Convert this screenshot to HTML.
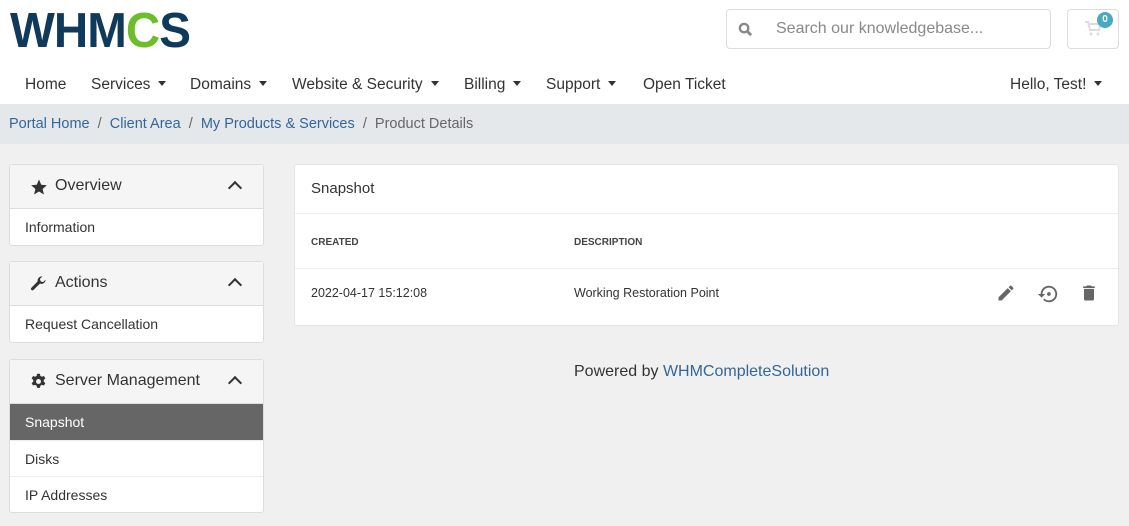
<!DOCTYPE html>
<html><head><meta charset="utf-8"><style>
*{box-sizing:border-box;margin:0;padding:0}
body{width:1129px;height:526px;overflow:hidden;background:#f0f0f0;font-family:"Liberation Sans",sans-serif;color:#333;position:relative}
.hdr{position:absolute;left:0;top:0;width:1129px;height:104px;background:#fff}
.logo{position:absolute;left:10px;top:3px;font-size:49px;font-weight:bold;color:#0f3a5b;letter-spacing:-1px;transform:scaleX(0.97);transform-origin:left}
.search{position:absolute;left:726px;top:9px;width:325px;height:40px;border:1px solid #ddd;border-radius:4px;font-size:16px;color:#888;padding:10px 0 0 49px}
.cart{position:absolute;left:1067px;top:9px;width:52px;height:40px;border:1px solid #ddd;border-radius:4px}
.badge{position:absolute;left:1097px;top:12px;width:16px;height:16px;border-radius:50%;background:#49a9c0;color:#fff;font-size:10px;font-weight:bold;text-align:center;line-height:16px}
.nav{position:absolute;top:76px;font-size:15.5px;color:#333}
.car::after{content:"";display:inline-block;margin-left:8px;border-left:4px solid transparent;border-right:4px solid transparent;border-top:5px solid #333;vertical-align:3px}
.bc{position:absolute;left:0;top:104px;width:1129px;height:40px;background:#e5e8eb;font-size:14.5px;padding:12px 0 0 9px;color:#666}
.bc a{color:#336699;text-decoration:none}
.side{position:absolute;left:9px;width:255px;background:#fff;border:1px solid #ddd;border-radius:3px}
.sh{height:44px;background:#f5f5f5;border-bottom:1px solid #ddd;font-size:16px;padding:12px 0 0 45px;position:relative}
.sh svg{position:absolute;left:20px;top:13px}
.sh::after{content:"";position:absolute;right:23px;top:18px;width:8px;height:8px;border-left:2px solid #333;border-top:2px solid #333;transform:rotate(45deg)}
.it{height:36px;font-size:14px;padding:10px 0 0 15px;border-top:1px solid #eee}
.main{position:absolute;left:294px;top:164px;width:825px;height:162px;background:#fff;border:1px solid #e5e5e5;border-radius:3px}
</style></head><body>
<div class="hdr"></div>
<div class="logo">WHM<span style="color:#6cbf2a">C</span>S</div>
<div class="search">Search our knowledgebase...</div>
<svg style="position:absolute;left:738px;top:22px" width="15" height="15" viewBox="0 0 16 16"><circle cx="6.5" cy="6.5" r="4.5" fill="none" stroke="#888" stroke-width="2.5"/><path d="M10 10l4 4" stroke="#888" stroke-width="3"/></svg>
<div class="cart"></div>
<svg style="position:absolute;left:1085px;top:21px" width="16" height="15" viewBox="0 0 16 15"><path d="M0 1h3l2 8h9l2-6H4" fill="none" stroke="#ddd" stroke-width="2"/><circle cx="6" cy="13" r="1.5" fill="#ddd"/><circle cx="13" cy="13" r="1.5" fill="#ddd"/></svg>
<div class="badge">0</div>
<span class="nav" style="left:25px">Home</span>
<span class="nav car" style="left:91px">Services</span>
<span class="nav car" style="left:190px">Domains</span>
<span class="nav car" style="left:292px">Website &amp; Security</span>
<span class="nav car" style="left:464px">Billing</span>
<span class="nav car" style="left:546px">Support</span>
<span class="nav" style="left:643px">Open Ticket</span>
<span class="nav car" style="left:1010px">Hello, Test!</span>
<div class="bc"><a>Portal Home</a> &nbsp;/&nbsp; <a>Client Area</a> &nbsp;/&nbsp; <a>My Products &amp; Services</a> &nbsp;/&nbsp; Product Details</div>
<div class="side" style="top:164px"><div class="sh"><svg width="18" height="18" viewBox="0 0 24 24"><path d="M12 2l3 7 7.5.6-5.7 5 1.8 7.4L12 18l-6.6 4 1.8-7.4-5.7-5L9 9z" fill="#333"/></svg>Overview</div><div class="it" style="border:0">Information</div></div>
<div class="side" style="top:261px"><div class="sh"><svg width="17" height="17" viewBox="0 0 24 24"><path d="M22 6.5a6 6 0 01-8 5.7L5 21a2 2 0 01-3-3l8.8-9A6 6 0 0117.5 2l-3.5 3.5 1 3.5 3.5 1z" fill="#333"/></svg>Actions</div><div class="it" style="border:0">Request Cancellation</div></div>
<div class="side" style="top:359px"><div class="sh"><svg width="17" height="17" viewBox="0 0 24 24"><path d="M10 1h4l.6 3 2.2 1.3 2.9-1 2 3.4-2.3 2v2.6l2.3 2-2 3.4-2.9-1-2.2 1.3-.6 3h-4l-.6-3-2.2-1.3-2.9 1-2-3.4 2.3-2v-2.6l-2.3-2 2-3.4 2.9 1L9.4 4z" fill="#333"/><circle cx="12" cy="12" r="3.5" fill="#f5f5f5"/></svg>Server Management</div><div class="it" style="border:0;background:#666;color:#fff">Snapshot</div><div class="it">Disks</div><div class="it">IP Addresses</div></div>
<div class="main">
<div style="height:49px;border-bottom:1px solid #eee;font-size:15px;padding:15px 0 0 16px">Snapshot</div>
<div style="height:55px;border-bottom:1px solid #eee;font-size:10px;font-weight:bold;color:#444;position:relative"><span style="position:absolute;left:16px;top:23px">CREATED</span><span style="position:absolute;left:279px;top:23px">DESCRIPTION</span></div>
<div style="position:relative;font-size:12.5px"><span style="position:absolute;left:16px;top:17px">2022-04-17 15:12:08</span><span style="position:absolute;left:279px;top:17px">Working Restoration Point</span>
<svg style="position:absolute;left:701px;top:14px" width="20" height="20" viewBox="0 0 24 24"><path d="M3 17.25V21h3.75L17.8 9.94l-3.75-3.75zM20.7 7.04a1 1 0 000-1.41l-2.34-2.34a1 1 0 00-1.41 0l-1.83 1.83 3.75 3.75z" fill="#666"/></svg>
<svg style="position:absolute;left:742px;top:14px" width="22" height="22" viewBox="0 0 24 24"><path d="M13 3a9 9 0 00-9 9H1l4 4 4-4H6a7 7 0 117 7 7 7 0 01-4.9-2l-1.4 1.4A9 9 0 1013 3z" fill="#666"/><circle cx="13" cy="12" r="2" fill="#666"/></svg>
<svg style="position:absolute;left:784px;top:14px" width="20" height="20" viewBox="0 0 24 24"><path d="M6 19a2 2 0 002 2h8a2 2 0 002-2V7H6zM19 4h-3.5l-1-1h-5l-1 1H5v2h14z" fill="#666"/></svg>
</div></div>
<div style="position:absolute;left:574px;top:363px;font-size:16px">Powered by <span style="color:#336699">WHMCompleteSolution</span></div>
</body></html>
